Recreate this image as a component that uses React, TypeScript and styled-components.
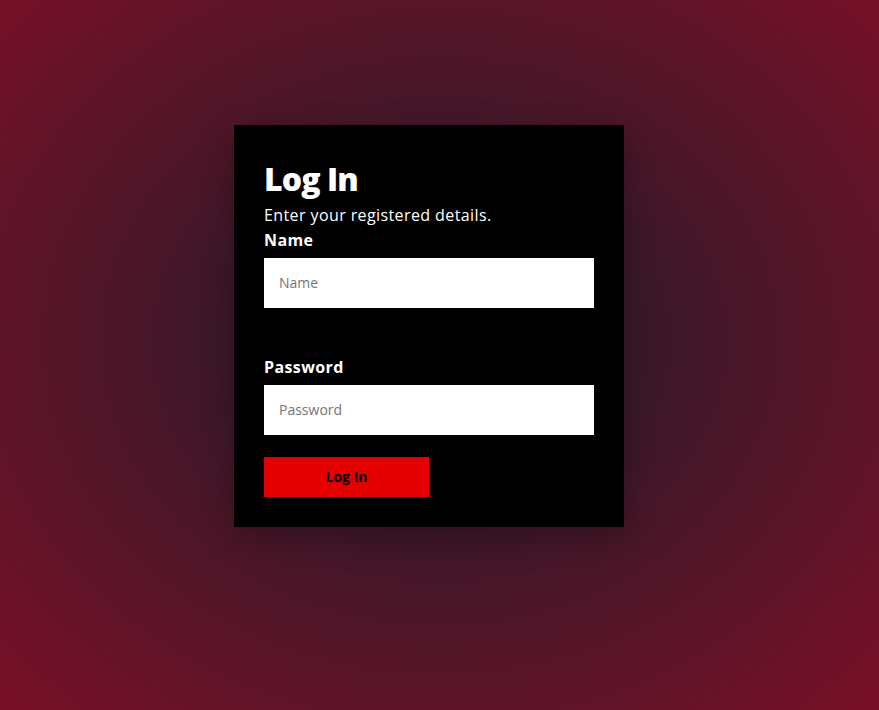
import React from "react";
import styled, { createGlobalStyle } from "styled-components";

const Global = createGlobalStyle`
  html, body { margin: 0; padding: 0; }
  body { font-family: "Open Sans", "Noto Sans", sans-serif; }
  * { box-sizing: border-box; }
`;

const Page = styled.div`
  min-height: 100vh;
  display: flex;
  justify-content: center;
  align-items: flex-start;
  padding: 125px 21px 0 0;
  background: radial-gradient(ellipse farthest-corner at 50% 48%, #2a1a2b 0%, #3c1829 35%, #7a1028 100%);
`;

const Card = styled.form`
  width: 390px;
  background: #000;
  padding: 30px;
  display: flex;
  flex-direction: column;
  box-shadow: 0 10px 30px rgba(0, 0, 0, 0.25);
`;

const Title = styled.h1`
  margin: 0;
  font-size: 32px;
  line-height: 48px;
  font-weight: 800;
  color: #fff;
  letter-spacing: -0.9px;
`;

const Subtitle = styled.p`
  margin: 0;
  font-size: 16px;
  line-height: 25px;
  font-weight: 400;
  color: #fff;
  letter-spacing: 0.4px;
`;

const Field = styled.div<{ $gapAfter: number }>`
  display: flex;
  flex-direction: column;
  gap: 6px;
  margin-bottom: ${(p) => p.$gapAfter}px;
`;

const Label = styled.label`
  font-size: 16px;
  line-height: 24px;
  font-weight: 700;
  color: #fff;
  letter-spacing: 0.4px;
`;

const Input = styled.input`
  width: 100%;
  height: 50px;
  border: none;
  outline: none;
  background: #fff;
  padding: 0 15px 1px;
  font-family: inherit;
  font-size: 14px;
  color: #222;
  &::placeholder { color: #757575; }
`;

const Button = styled.button`
  width: 165px;
  height: 40px;
  border: none;
  background: #e50000;
  color: #000;
  font-family: inherit;
  font-size: 14px;
  font-weight: 700;
  padding: 0 0 1px;
  cursor: pointer;
`;

export default function App() {
  return (
    <>
      <Global />
      <Page>
        <Card onSubmit={(e) => e.preventDefault()}>
          <Title>Log In</Title>
          <Subtitle>Enter your registered details.</Subtitle>
          <Field $gapAfter={47}>
            <Label htmlFor="name">Name</Label>
            <Input id="name" placeholder="Name" />
          </Field>
          <Field $gapAfter={22}>
            <Label htmlFor="password">Password</Label>
            <Input id="password" type="password" placeholder="Password" />
          </Field>
          <Button type="submit">Log In</Button>
        </Card>
      </Page>
    </>
  );
}
